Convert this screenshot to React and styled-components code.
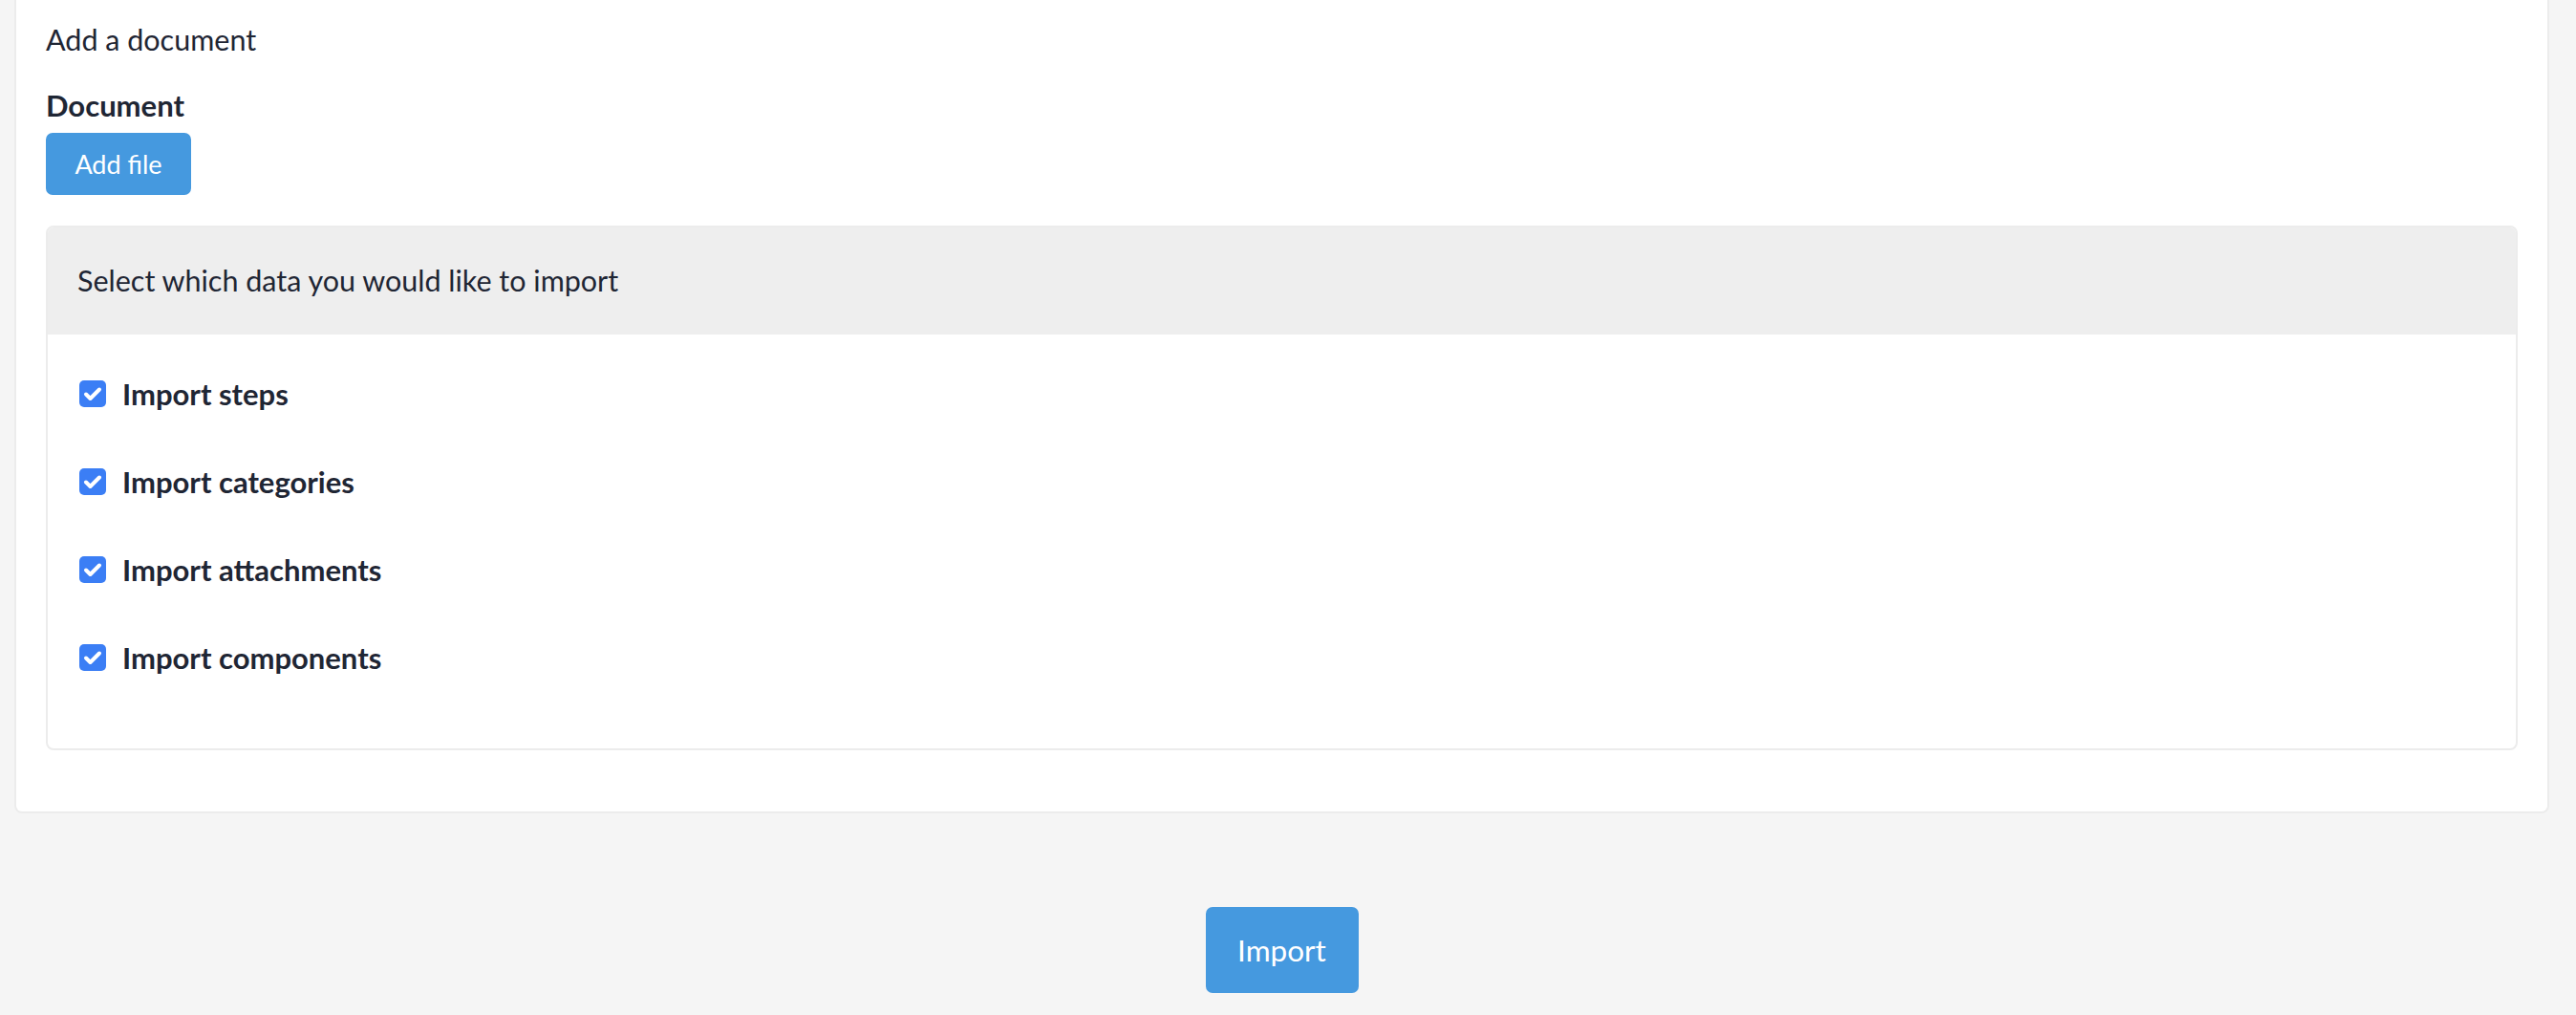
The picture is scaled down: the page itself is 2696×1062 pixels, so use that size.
import React from "react";
import styled, { createGlobalStyle } from "styled-components";

const Global = createGlobalStyle`
  html, body { margin: 0; padding: 0; background: #f5f5f5; }
  body { font-family: Lato, "Noto Sans", sans-serif; color: #1f2634; }
`;

const Page = styled.div`
  width: 2696px;
  height: 1062px;
  box-sizing: border-box;
  padding: 0 28px 0 15px;
  overflow: hidden;
  display: flex;
  flex-direction: column;
`;

const Card = styled.section`
  background: #fff;
  border: 2px solid #ececec;
  border-top: none;
  border-radius: 0 0 8px 8px;
  padding: 17px 31px 64px 31px;
`;

const Title = styled.div`
  font-size: 30.5px;
  line-height: 48px;
  font-weight: 400;
`;

const Label = styled.div`
  margin-top: 25px;
  font-size: 31px;
  line-height: 40px;
  font-weight: 700;
`;

const Button = styled.button`
  display: block;
  border: none;
  background: #4599df;
  color: #fff;
  font-family: Lato, "Noto Sans", sans-serif;
  font-size: ${(p) => p.$size}px;
  border-radius: 7px;
  width: ${(p) => p.$w}px;
  height: ${(p) => p.$h}px;
  margin-top: ${(p) => p.$mt || 0}px;
  padding: 0;
  cursor: pointer;
`;

const Panel = styled.div`
  margin-top: 32px;
  border: 2px solid #ececec;
  border-radius: 8px;
  overflow: hidden;
`;

const PanelHeader = styled.div`
  height: 114px;
  background: #eeeeee;
  display: flex;
  align-items: center;
  padding: 0 33px;
  font-size: 30.5px;
  margin: -2px -2px 0 -2px;
`;

const PanelBody = styled.div`
  padding: 16px 33px 49px 33px;
`;

const Row = styled.label`
  height: 92px;
  display: flex;
  align-items: center;
  gap: 17px;
  font-size: 31px;
  font-weight: 700;
`;

const Box = styled.span`
  width: 28px;
  height: 28px;
  border-radius: 5px;
  background: #3b7ef5;
  display: inline-flex;
  flex: none;
`;

const Footer = styled.div`
  display: flex;
  justify-content: center;
  padding-top: 98px;
`;

const Check = () => (
  <svg width="28" height="28" viewBox="0 0 28 28">
    <path d="M7 14.5l4.5 4.5L21 9.5" fill="none" stroke="#fff" strokeWidth="4" strokeLinecap="round" strokeLinejoin="round" />
  </svg>
);

const items = ["Import steps", "Import categories", "Import attachments", "Import components"];

export default function App() {
  return (
    <>
      <Global />
      <Page>
        <Card>
          <Title>Add a document</Title>
          <Label>Document</Label>
          <Button $w={152} $h={65} $size={27} $mt={9}>Add file</Button>
          <Panel>
            <PanelHeader>Select which data you would like to import</PanelHeader>
            <PanelBody>
              {items.map((t) => (
                <Row key={t}>
                  <Box><Check /></Box>
                  {t}
                </Row>
              ))}
            </PanelBody>
          </Panel>
        </Card>
        <Footer>
          <Button $w={160} $h={90} $size={31.5}>Import</Button>
        </Footer>
      </Page>
    </>
  );
}
